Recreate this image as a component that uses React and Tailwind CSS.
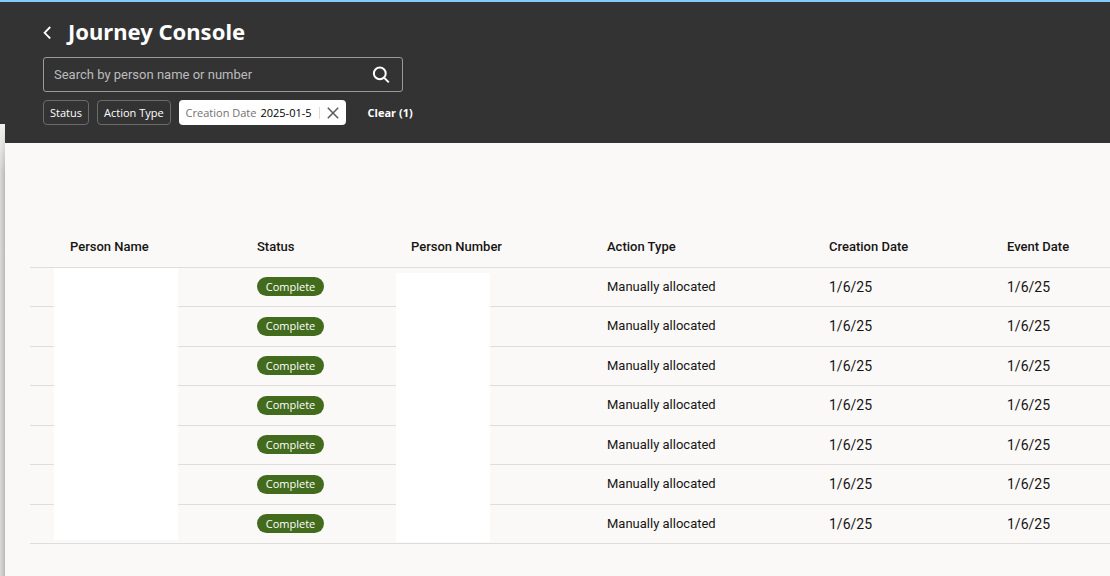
import React, { useState } from 'react';

const rows = [1, 2, 3, 4, 5, 6, 7].map((id) => ({
  id,
  status: 'Complete',
  actionType: 'Manually allocated',
  creationDate: '1/6/25',
  eventDate: '1/6/25',
}));

const App = () => {
  const [search, setSearch] = useState('');

  return (
    <div className="flex min-h-screen w-full overflow-hidden border-t-2 border-[#82cbfa] bg-[#333333] font-['Roboto',sans-serif] text-[13px] leading-5 text-[#161513]">

      {/* Edge of the page behind the drawer */}
      <div className="flex w-[5px] shrink-0 flex-col pt-[122px]">
        <div className="flex flex-1 flex-col bg-linear-to-r from-[#dddbda] to-[#bcbab9]">
          <div className="h-12 bg-linear-to-b from-[#f3f1ef] to-transparent" />
        </div>
      </div>

      <div className="flex min-w-0 flex-1 flex-col">

        {/* Header */}
        <header className="bg-[#333333] pt-4 pb-[18px] pl-[38px] text-white">
          <div className="flex h-7 items-center gap-4">
            <button type="button" aria-label="Back" className="flex w-[9px]">
              <svg className="h-[13px] w-2" viewBox="0 0 8 13" fill="none" stroke="currentColor" strokeWidth="1.8">
                <path d="M7.2 1 1.6 6.8l5.6 5.7" />
              </svg>
            </button>
            <h1 className="pb-[2px] font-['Noto_Sans',sans-serif] text-[22px] font-bold">Journey Console</h1>
          </div>

          <div className="mt-[11px] flex h-[35px] w-[360px] items-center rounded-[3px] border border-[#9a9a9a] pr-3 pl-[10px]">
            <input
              type="text"
              aria-label="Search by person name or number"
              placeholder="Search by person name or number"
              value={search}
              onChange={(e) => setSearch(e.target.value)}
              className="h-5 min-w-0 flex-1 bg-transparent outline-none placeholder:text-[#bcbcbc]"
            />
            <button type="button" aria-label="Search">
              <svg className="size-[18px]" viewBox="0 0 18 18" fill="none" stroke="currentColor" strokeWidth="2">
                <circle cx="7.8" cy="7.4" r="5.9" />
                <path d="m12 11.6 4.8 4.8" />
              </svg>
            </button>
          </div>

          <div className="mt-2 flex h-[25px] items-stretch gap-2 font-['Open_Sans',sans-serif] text-[11px] font-medium">
            <button type="button" className="rounded-[4px] border border-[#6b6b6b] px-[6px]">Status</button>
            <button type="button" className="rounded-[4px] border border-[#6b6b6b] px-[6px]">Action Type</button>
            <div className="flex items-center rounded-[4px] bg-white pl-[7px] text-black">
              <span className="font-normal text-[#74706d]">Creation Date</span>
              <span className="ml-1">2025-01-5</span>
              <button type="button" aria-label="Remove Creation Date" className="ml-[7px] flex h-3 items-center border-l border-[#dedcda] px-[7px]">
                <svg className="size-3 text-[#5c5957]" viewBox="0 0 12 12" fill="none" stroke="currentColor" strokeWidth="1.5">
                  <path d="m.8.8 10.4 10.4M11.2.8.8 11.2" />
                </svg>
              </button>
            </div>
            <button type="button" className="ml-[14px] font-bold">Clear (1)</button>
          </div>
        </header>

        {/* Results */}
        <main className="flex-1 bg-[#fbf9f8] pt-[84px] pl-[25px]">
          <div className="relative">
            <table className="w-full table-fixed border-collapse text-left">
              <thead>
                <tr className="h-10 border-b border-[#dfdddb]">
                  <th className="w-[227px] pl-10 font-medium">Person Name</th>
                  <th className="w-[154px] font-medium">Status</th>
                  <th className="w-[196px] font-medium">Person Number</th>
                  <th className="w-[222px] font-medium">Action Type</th>
                  <th className="w-[178px] font-medium">Creation Date</th>
                  <th className="font-medium">Event Date</th>
                </tr>
              </thead>
              <tbody>
                {rows.map((row) => (
                  <tr key={row.id} className="h-[39px] border-b border-[#dfdddb] even:h-10">
                    <td />
                    <td>
                      <span className="flex h-[19px] w-[67px] items-center justify-center rounded-full bg-[#436b1d] font-['Open_Sans',sans-serif] text-[11px] font-medium text-white">
                        {row.status}
                      </span>
                    </td>
                    <td />
                    <td>{row.actionType}</td>
                    <td className="text-[14px]">{row.creationDate}</td>
                    <td className="text-[14px]">{row.eventDate}</td>
                  </tr>
                ))}
              </tbody>
            </table>

            {/* Masks over the personal data */}
            <div className="absolute top-[41px] bottom-1 left-6 w-[124px] bg-white" />
            <div className="absolute top-[46px] bottom-[2px] left-[366px] w-[94px] bg-white" />
          </div>
        </main>
      </div>
    </div>
  );
};

export default App;
